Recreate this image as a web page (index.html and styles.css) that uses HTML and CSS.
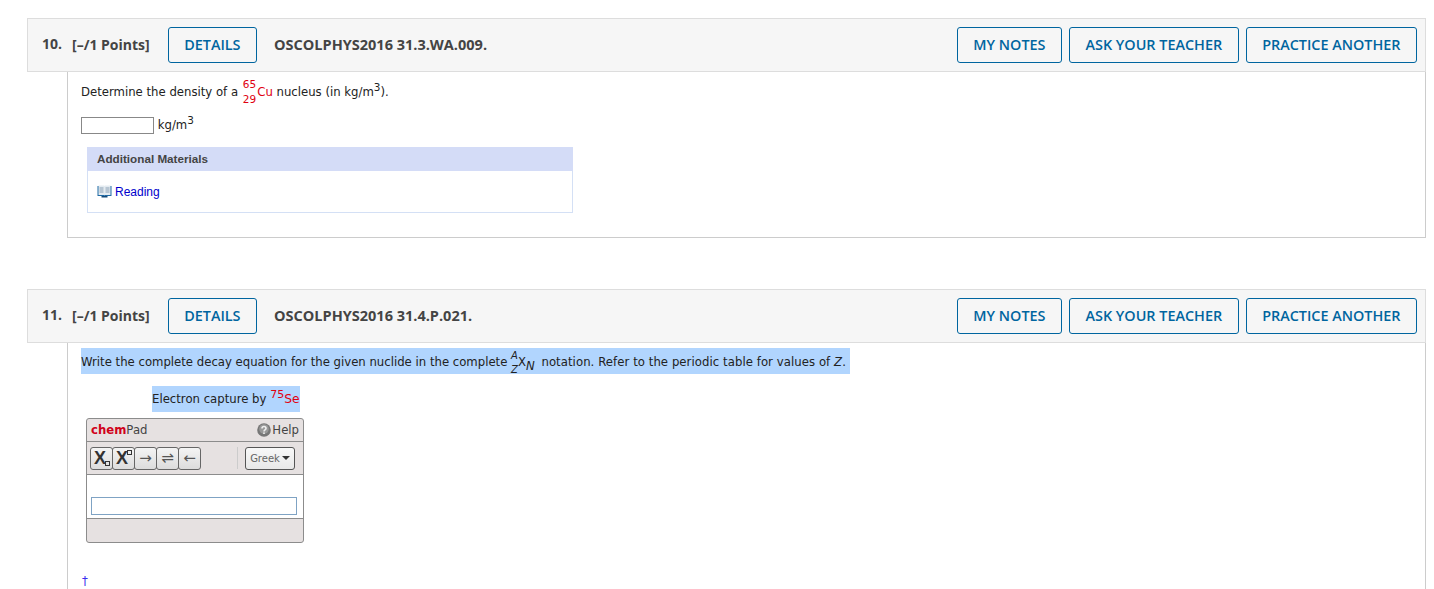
FILE: index.html
```html
<!DOCTYPE html>
<html lang="en">
<head>
    <meta charset="UTF-8">
    <title>Assignment</title>
    <link rel="stylesheet" href="styles.css">
</head>
<body>
    <div class="question first">
        <div class="q-header">
            <span class="q-number">10.</span>
            <span class="q-points">[&ndash;/1 Points]</span>
            <a class="btn details">DETAILS</a>
            <span class="q-code">OSCOLPHYS2016 31.3.WA.009.</span>
            <div class="q-actions">
                <a class="btn">MY NOTES</a>
                <a class="btn">ASK YOUR TEACHER</a>
                <a class="btn">PRACTICE ANOTHER</a>
            </div>
        </div>
        <div class="q-body">
            <p class="prompt">Determine the density of a <span class="nuclide"><span class="stack"><span>65</span><span>29</span></span>Cu</span> nucleus (in kg/m<sup>3</sup>).</p>
            <p class="answer"><input class="answer-box" type="text"> kg/m<sup>3</sup></p>
            <div class="materials">
                <div class="materials-title">Additional Materials</div>
                <div class="materials-body">
                    <svg class="book" width="15" height="13" viewBox="0 0 15 13">
                        <path d="M0.5 1h14v10h-14z" fill="#1f6aa5"/>
                        <path d="M1.5 0.5h5.5l0.5 0.6 0.5-0.6h5.5v9.5h-5.5l-0.5 0.5-0.5-0.5h-5.5z" fill="#e4ebf1"/>
                        <path d="M2.5 3h4M2.5 5h4M2.5 7h4M8.5 3h4M8.5 5h4M8.5 7h4" stroke="#8aa0b5" stroke-width="1"/>
                        <path d="M4.5 11h6v1.5h-6z" fill="#174a78"/>
                    </svg>
                    <a class="reading">Reading</a>
                </div>
            </div>
        </div>
    </div>

    <div class="question">
        <div class="q-header">
            <span class="q-number">11.</span>
            <span class="q-points">[&ndash;/1 Points]</span>
            <a class="btn details">DETAILS</a>
            <span class="q-code">OSCOLPHYS2016 31.4.P.021.</span>
            <div class="q-actions">
                <a class="btn">MY NOTES</a>
                <a class="btn">ASK YOUR TEACHER</a>
                <a class="btn">PRACTICE ANOTHER</a>
            </div>
        </div>
        <div class="q-body open">
            <p class="prompt selected-line"><span class="selected">Write the complete decay equation for the given nuclide in the complete <span class="notation"><span class="stack italic"><span>A</span><span>Z</span></span>X<i class="sub-n">N</i></span> <span class="tail">notation. Refer to the periodic table for values of <i>Z</i>.</span></span></p>
            <p class="capture"><span class="selected">Electron capture by <span class="red"><sup>75</sup>Se</span></span></p>
            <div class="chempad">
                <div class="pad-top">
                    <span class="pad-name"><b>chem</b>Pad</span>
                    <span class="pad-help">
                        <svg width="14" height="14" viewBox="0 0 14 14">
                            <circle cx="7" cy="7" r="6.8" fill="#777"/>
                            <circle cx="7" cy="6" r="4.8" fill="#999"/>
                            <path d="M5 5.4c0-2.6 4-2.6 4 0 0 1.5-2 1.4-2 3" fill="none" stroke="#eee" stroke-width="1.6"/>
                            <rect x="6.2" y="9.4" width="1.6" height="1.6" fill="#eee"/>
                        </svg>
                        Help
                    </span>
                </div>
                <div class="pad-tools">
                    <div class="tool-group">
                        <span class="tool big">X<i class="sub-box"></i></span>
                        <span class="tool big">X<i class="sup-box"></i></span>
                        <span class="tool">&rarr;</span>
                        <span class="tool">&#8652;</span>
                        <span class="tool">&larr;</span>
                    </div>
                    <span class="tool-sep"></span>
                    <span class="greek">Greek<i class="caret"></i></span>
                </div>
                <div class="pad-edit"><input class="pad-input" type="text"></div>
                <div class="pad-bottom"></div>
            </div>
            <p class="dagger">&dagger;</p>
        </div>
    </div>
</body>
</html>
```

FILE: styles.css
```css
body {
    margin: 0;
    padding: 18px 8px 0 27px;
    background-color: white;
    font-family: "DejaVu Sans", sans-serif;
    font-size: 11.7px;
    color: #222;
}
p {
    margin: 0;
}
sup {
    font-size: 0.9em;
    line-height: 0;
}
.question.first {
    margin-bottom: 51px;
}
.q-header {
    display: flex;
    align-items: center;
    height: 52px;
    background-color: #f6f6f6;
    border: 1px solid #ddd;
    font-family: "Open Sans", sans-serif;
    font-weight: 600;
    color: #444;
}
.q-number {
    margin-left: 14px;
    padding-bottom: 4px;
    font-size: 14px;
    font-weight: 700;
}
.q-points {
    margin-left: 10px;
    padding-bottom: 2px;
    font-size: 14px;
    font-weight: 700;
}
.first .q-points {
    margin-left: 10px;
}
.btn {
    display: block;
    padding: 0 15.5px;
    line-height: 34px;
    border: 1px solid #00659f;
    border-radius: 3px;
    color: #00659f;
    font-size: 14.4px;
    font-weight: 600;
}
.details {
    margin-left: 18px;
}
.q-code {
    margin-left: 17px;
    padding-bottom: 2px;
    font-size: 14.5px;
    font-weight: 700;
}
.q-actions {
    display: flex;
    gap: 7px;
    margin-left: auto;
    margin-right: 8px;
}
.q-body {
    margin-left: 40px;
    padding: 0 13px;
    height: 165px;
    border: 1px solid #ccc;
    border-top: none;
}
.q-body.open {
    height: 246px;
    overflow: hidden;
    border-bottom: none;
}
.prompt {
    padding-top: 9px;
    line-height: 22px;
}
.nuclide {
    color: #e00010;
}
.stack {
    display: inline-flex;
    flex-direction: column;
    height: 30px;
    margin: -6px 1px -4px 1px;
    vertical-align: middle;
    font-size: 10.5px;
    line-height: 15px;
    text-align: right;
}
.answer {
    margin-top: 12px;
    line-height: 20px;
}
.answer-box {
    width: 73px;
    height: 17px;
    box-sizing: border-box;
    margin: 0;
    padding: 0;
    border: 1px solid #888;
    vertical-align: -1px;
}
.materials {
    width: 484px;
    margin: 12px 0 0 6px;
    border: 1px solid #d4e0f5;
    font-family: "Liberation Sans", sans-serif;
}
.materials-title {
    padding-left: 10px;
    line-height: 24px;
    margin: -1px -1px 0;
    background-color: #d4dcf7;
    font-size: 11.7px;
    font-weight: 700;
    color: #444;
}
.materials-body {
    display: flex;
    align-items: center;
    gap: 3px;
    height: 41px;
    padding-left: 9px;
    font-size: 12px;
}
.reading {
    color: #0000cc;
}
.selected {
    background-color: #b1d5fe;
    padding: 7px 4px 5px 0;
}
.selected-line {
    padding-top: 8px;
}
.notation .stack {
    margin: -5px 0;
    font-size: 10px;
    line-height: 14px;
    height: 28px;
    text-align: left;
    font-style: italic;
}
.sub-n {
    position: relative;
    top: 4px;
    margin-right: 3px;
}
.tail {
    letter-spacing: 0.06px;
}
.capture {
    margin: 16px 0 0 71px;
    line-height: 20px;
}
.capture .selected {
    padding: 6px 0;
}
.red {
    color: #e00010;
    font-size: 12.3px;
}
.chempad {
    width: 216px;
    margin: 9px 0 0 5px;
    border: 1px solid #8c8c8c;
    border-radius: 3px;
    background-color: #e6e1e1;
    color: #444;
}
.pad-top {
    display: flex;
    justify-content: space-between;
    align-items: center;
    height: 22px;
    padding: 0 4px;
    border-bottom: 1px solid #8c8c8c;
    font-size: 11.7px;
}
.pad-name b {
    color: #d0021b;
}
.pad-help {
    display: flex;
    align-items: center;
    gap: 1px;
}
.pad-tools {
    display: flex;
    align-items: center;
    height: 32px;
    padding: 0 3px;
    border-bottom: 1px solid #8c8c8c;
}
.tool-group {
    display: flex;
}
.tool {
    position: relative;
    display: block;
    width: 21px;
    height: 21px;
    border: 1px solid #666;
    border-radius: 3px;
    margin-right: -1px;
    background: linear-gradient(#f4f4f4, #dcdcdc);
    text-align: center;
    font-size: 15px;
    line-height: 21px;
    color: #555;
}
.tool.big {
    font-family: "Liberation Sans", sans-serif;
    font-size: 18px;
    font-weight: 700;
    text-align: left;
    text-indent: 3px;
    color: #333;
}
.sub-box, .sup-box {
    position: absolute;
    width: 3px;
    height: 3px;
    border: 1px solid #333;
}
.sub-box {
    right: 2px;
    bottom: 3px;
}
.sup-box {
    right: 2px;
    top: 2px;
}
.tool-sep {
    width: 1px;
    height: 22px;
    margin-left: 37px;
    background-color: #ccc;
}
.greek {
    display: flex;
    align-items: center;
    justify-content: center;
    gap: 2px;
    width: 48px;
    height: 21px;
    margin-left: 7px;
    border: 1px solid #555;
    border-radius: 3px;
    background: linear-gradient(#f8f8f8, #e8e8e8);
    font-size: 10px;
    color: #666;
}
.caret {
    border-top: 4px solid #333;
    border-left: 4px solid transparent;
    border-right: 4px solid transparent;
}
.pad-edit {
    height: 44px;
    box-sizing: border-box;
    padding-top: 22px;
    background-color: white;
    border-bottom: 1px solid #8c8c8c;
}
.pad-input {
    display: block;
    width: 206px;
    height: 18px;
    box-sizing: border-box;
    margin: 0 0 0 4px;
    padding: 0;
    border: 1px solid #7fa3c4;
}
.pad-bottom {
    height: 23px;
}
.dagger {
    margin-top: 31px;
    padding-left: 1px;
    color: #3a2cf0;
}
```
